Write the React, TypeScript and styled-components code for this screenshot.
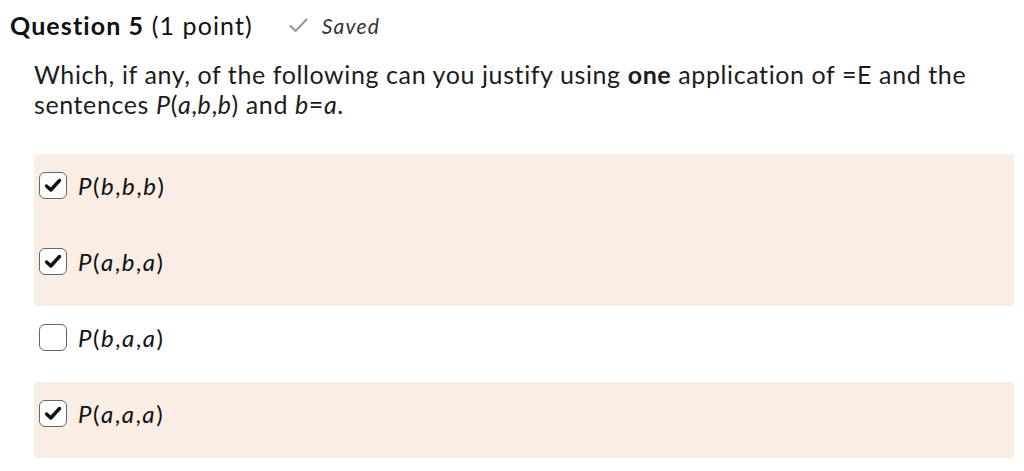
import React from "react";
import styled, { createGlobalStyle } from "styled-components";

const GlobalStyle = createGlobalStyle`
  html, body {
    margin: 0;
    padding: 0;
    background: #ffffff;
  }
  body {
    font-family: Lato, "Liberation Sans", sans-serif;
    color: #1c1c1c;
  }
`;

const options = [
  { args: ["b", "b", "b"], checked: true },
  { args: ["a", "b", "a"], checked: true },
  { args: ["b", "a", "a"], checked: false },
  { args: ["a", "a", "a"], checked: true },
];

// P(x,y,z) with italic letters and upright punctuation
function Atom({ args }: { args: string[] }) {
  return (
    <>
      <i>P</i>(
      {args.map((a, i) => (
        <React.Fragment key={i}>
          {i > 0 && ","}
          <i>{a}</i>
        </React.Fragment>
      ))}
      )
    </>
  );
}

export default function App() {
  return (
    <>
      <GlobalStyle />
      <Page>
        <Header>
          <Title>
            <strong>Question 5</strong> (1 point)
          </Title>
          <Status>
            <CheckMark width="19" height="15" viewBox="0 0 19 15">
              <path d="M1.5 8 L6.5 13 L17.5 1.5" />
            </CheckMark>
            <em>Saved</em>
          </Status>
        </Header>
        <Body>
          <Prompt>
            Which, if any, of the following can you justify using <b>one</b> application of =E and the
            sentences <Atom args={["a", "b", "b"]} /> and <i>b</i>=<i>a</i>.
          </Prompt>
          <OptionList>
            {options.map((o) => (
              <Option key={o.args.join()} $selected={o.checked}>
                <Box>
                  {o.checked && (
                    <svg width="18" height="15" viewBox="0 0 18 15">
                      <path
                        d="M2.5 8 L6.8 12 L15.5 2.5"
                        fill="none"
                        stroke="#111"
                        strokeWidth="3.4"
                        strokeLinecap="round"
                        strokeLinejoin="round"
                      />
                    </svg>
                  )}
                </Box>
                <Formula>
                  <Atom args={o.args} />
                </Formula>
              </Option>
            ))}
          </OptionList>
        </Body>
      </Page>
    </>
  );
}

const Page = styled.div`
  padding: 8px 10px 0 10px;
`;

const Header = styled.div`
  display: flex;
  align-items: center;
  gap: 36px;
  height: 34px;
`;

const Title = styled.h2`
  margin: 0;
  font-size: 25px;
  line-height: 34px;
  font-weight: 400;
  letter-spacing: 1.1px;
  color: #111;
  strong {
    font-weight: 700;
  }
`;

const Status = styled.div`
  display: flex;
  align-items: center;
  gap: 14px;
  font-size: 21px;
  letter-spacing: 1.2px;
  color: #333;
  em {
    font-style: italic;
  }
`;

const CheckMark = styled.svg`
  fill: none;
  stroke: #9a9a9a;
  stroke-width: 2.2;
  stroke-linecap: round;
  stroke-linejoin: round;
`;

const Body = styled.div`
  padding: 17px 0 0 24px;
  width: 980px;
`;

const Prompt = styled.p`
  margin: 0 0 35px;
  font-size: 25px;
  line-height: 30px;
  letter-spacing: 0.6px;
  color: #1c1c1c;
  b {
    font-weight: 700;
  }
`;

const OptionList = styled.div`
  display: flex;
  flex-direction: column;
`;

const Option = styled.label<{ $selected: boolean }>`
  display: flex;
  align-items: center;
  gap: 11px;
  height: 76px;
  padding: 0 0 14px 5px;
  box-sizing: border-box;
  background: ${(p) => (p.$selected ? "#faede3" : "transparent")};
`;

const Box = styled.span`
  display: flex;
  align-items: center;
  justify-content: center;
  width: 28px;
  height: 27px;
  box-sizing: border-box;
  border: 1.5px solid #666;
  border-radius: 6px;
  background: #fff;
`;

const Formula = styled.span`
  font-size: 24px;
  letter-spacing: 1.5px;
  color: #111;
`;
